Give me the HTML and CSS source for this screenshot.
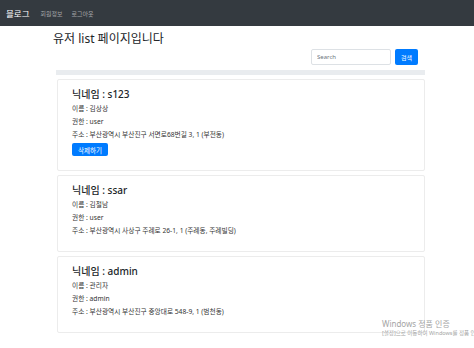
FILE: index.html
```html
<!DOCTYPE html>
<html lang="ko">
<head>
  <meta charset="UTF-8" />
  <meta name="viewport" content="width=device-width, initial-scale=1.0"/>
  <title>블로그</title>
  <link rel="stylesheet" href="styles.css">
</head>
<body>
  <nav class="navbar">
    <a class="brand" href="#">블로그</a>
    <a class="nav-link" href="#">회원정보</a>
    <a class="nav-link" href="#">로그아웃</a>
  </nav>

  <div class="container">
    <h2 class="title">유저 list 페이지입니다</h2>
    <form class="search">
      <input type="text" placeholder="Search">
      <button type="button" class="btn">검색</button>
    </form>
    <div class="jumbo"></div>

    <div class="card">
      <h4>닉네임 : s123</h4>
      <p>이름 : 김상상</p>
      <p>권한 : user</p>
      <p>주소 : 부산광역시 부산진구 서면로68번길 3, 1 (부전동)</p>
      <button type="button" class="btn btn-del">삭제하기</button>
    </div>

    <div class="card">
      <h4>닉네임 : ssar</h4>
      <p>이름 : 김철남</p>
      <p>권한 : user</p>
      <p>주소 : 부산광역시 사상구 주례로 26-1, 1 (주례동, 주례빌딩)</p>
    </div>

    <div class="card">
      <h4>닉네임 : admin</h4>
      <p>이름 : 관리자</p>
      <p>권한 : admin</p>
      <p>주소 : 부산광역시 부산진구 중앙대로 548-9, 1 (범천동)</p>
    </div>
  </div>

  <div class="watermark">
    <div class="wm-title">Windows 정품 인증</div>
    <div class="wm-sub">[설정]으로 이동하여 Windows를 정품 인증합니다.</div>
  </div>
</body>
</html>
```

FILE: styles.css
```css
body {
  margin: 0;
  font-family: "Noto Sans", "Noto Sans CJK KR", sans-serif;
  color: #212529;
  background: #fff;
  overflow: hidden;
}

.navbar {
  display: flex;
  align-items: center;
  height: 26px;
  padding: 0 6px;
  background-color: #343a40;
}

.brand {
  color: #fff;
  font-size: 8.5px;
  text-decoration: none;
  margin-right: 11px;
}

.nav-link {
  color: rgba(255,255,255,0.55);
  font-size: 6px;
  text-decoration: none;
  margin-right: 9px;
}

.container {
  padding: 0 48px 0 53px;
}

.title {
  font-size: 12px;
  font-weight: normal;
  line-height: 18px;
  margin: 4px 0 1px;
}

.search {
  display: flex;
  justify-content: flex-end;
  gap: 4px;
  padding-right: 8px;
  margin: 0;
}

.search input {
  width: 80px;
  height: 16px;
  box-sizing: border-box;
  border: 1px solid #dde1e5;
  border-radius: 2px;
  padding: 0 5px;
  font-family: inherit;
  font-size: 6px;
  color: #495057;
}

.search input::placeholder {
  color: #6c757d;
}

.btn {
  display: block;
  height: 16px;
  width: 23px;
  padding: 0;
  border: none;
  border-radius: 2px;
  background-color: #007bff;
  color: #fff;
  font-family: inherit;
  font-size: 6px;
}

.jumbo {
  height: 5px;
  margin: 5px 1px 4px 3px;
  background-color: #e9ecef;
}

.card {
  margin: 0 1px 4px 4px;
  padding: 7px 14px 12px;
  border: 1px solid #ececec;
  border-radius: 2px;
  font-size: 6.5px;
}

.card h4 {
  font-size: 10px;
  font-weight: 500;
  line-height: 14px;
  margin: 0 0 3px;
}

.card p {
  font-size: 6.7px;
  line-height: 9px;
  margin: 0 0 4px;
  color: #333;
}

.btn-del {
  width: 36px;
  height: 13px;
  margin: 1px 0 2px;
  font-size: 6.5px;
}

.watermark {
  position: absolute;
  left: 382px;
  top: 318px;
  color: #a4a4a4;
  white-space: nowrap;
}

.wm-title {
  font-size: 8px;
  line-height: 11px;
}

.wm-sub {
  font-size: 5.5px;
  line-height: 8px;
}
```
